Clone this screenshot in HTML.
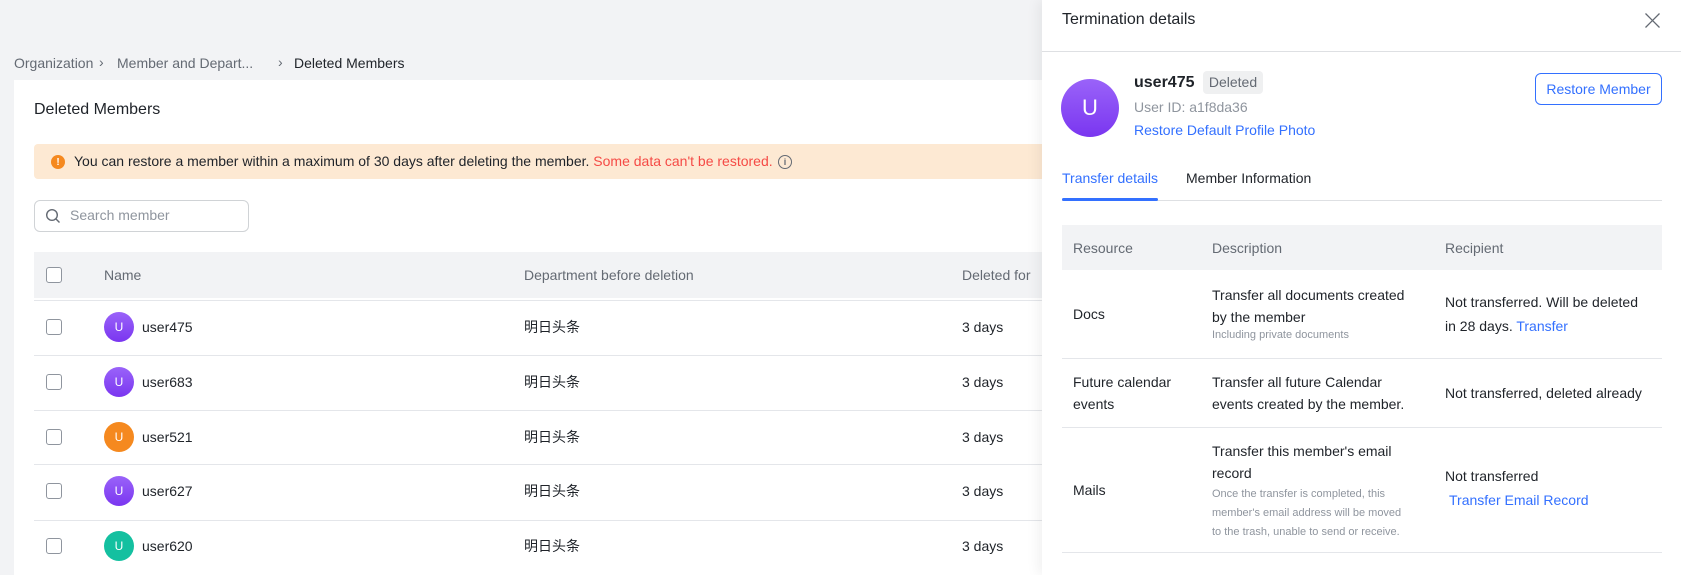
<!DOCTYPE html>
<html><head><meta charset="utf-8"><style>
*{box-sizing:border-box;margin:0;padding:0}
body{width:1681px;height:575px;overflow:hidden;background:#f2f3f5;font-family:"Liberation Sans","Noto Sans CJK SC",sans-serif;font-size:14px;color:#1f2329;position:relative}
.abs{position:absolute;white-space:nowrap}
.av{position:absolute;border-radius:50%;color:#fff;display:flex;align-items:center;justify-content:center;font-size:12px}
.pur{background:linear-gradient(180deg,#9a63f9,#7a36f0)}
.cb{position:absolute;width:16px;height:16px;border:1px solid #8f959e;border-radius:3px;background:#fff}
.sep{position:absolute;height:1px;background:#e4e6ea}
.blue{color:#3370ff}
.grey{color:#8f959e}
.cn{top:-2px}
</style></head><body>
<div class="abs" style="left:14px;top:55px;color:#646a73">Organization</div>
<div class="abs" style="left:99px;top:54px;color:#646a73">›</div>
<div class="abs" style="left:117px;top:55px;color:#646a73">Member and Depart...</div>
<div class="abs" style="left:278px;top:54px;color:#646a73">›</div>
<div class="abs" style="left:294px;top:55px;color:#1f2329">Deleted Members</div>

<div style="position:absolute;left:14px;top:80px;width:1100px;height:495px;background:#fff"></div>
<div class="abs" style="left:34px;top:101px;font-size:16px">Deleted Members</div>
<div style="position:absolute;left:34px;top:144px;width:1100px;height:35px;background:#fde9d3;border-radius:4px"></div>
<div class="av" style="left:51px;top:155px;width:14px;height:14px;background:#f5891f;font-size:10px;font-weight:bold">!</div>
<div class="abs" style="left:74px;top:153px">You can restore a member within a maximum of 30 days after deleting the member. <span style="color:#f54a45">Some data can't be restored.</span></div>
<div class="av" style="left:778px;top:155px;width:14px;height:14px;border:1.3px solid #646a73;color:#646a73;font-size:9px;font-weight:bold">i</div>

<div style="position:absolute;left:34px;top:200px;width:215px;height:32px;border:1px solid #d0d3d6;border-radius:6px"></div>
<svg class="abs" style="left:45px;top:208px" width="16" height="16" viewBox="0 0 16 16"><circle cx="7" cy="7" r="5.3" fill="none" stroke="#646a73" stroke-width="1.4"/><path d="M11 11l3.5 3.5" stroke="#646a73" stroke-width="1.4"/></svg>
<div class="abs grey" style="left:70px;top:207px">Search member</div>

<div style="position:absolute;left:34px;top:252px;width:1100px;height:46px;background:#f2f3f5"></div>
<div class="cb" style="left:46px;top:267px"></div>
<div class="abs" style="left:104px;top:267px;color:#646a73">Name</div>
<div class="abs" style="left:524px;top:267px;color:#646a73">Department before deletion</div>
<div class="abs" style="left:962px;top:267px;color:#646a73">Deleted for</div>

<div class="sep" style="left:34px;top:300px;width:1100px"></div>
<div class="cb" style="left:46px;top:319px"></div><div class="av pur" style="left:104px;top:312px;width:30px;height:30px">U</div><div class="abs" style="left:142px;top:319px">user475</div><div class="abs" style="left:524px;top:317px">明日头条</div><div class="abs" style="left:962px;top:319px">3 days</div>
<div class="sep" style="left:34px;top:355px;width:1100px"></div>
<div class="cb" style="left:46px;top:374px"></div><div class="av pur" style="left:104px;top:367px;width:30px;height:30px">U</div><div class="abs" style="left:142px;top:374px">user683</div><div class="abs" style="left:524px;top:372px">明日头条</div><div class="abs" style="left:962px;top:374px">3 days</div>
<div class="sep" style="left:34px;top:410px;width:1100px"></div>
<div class="cb" style="left:46px;top:429px"></div><div class="av" style="left:104px;top:422px;width:30px;height:30px;background:#f5891f">U</div><div class="abs" style="left:142px;top:429px">user521</div><div class="abs" style="left:524px;top:427px">明日头条</div><div class="abs" style="left:962px;top:429px">3 days</div>
<div class="sep" style="left:34px;top:464px;width:1100px"></div>
<div class="cb" style="left:46px;top:483px"></div><div class="av pur" style="left:104px;top:476px;width:30px;height:30px">U</div><div class="abs" style="left:142px;top:483px">user627</div><div class="abs" style="left:524px;top:481px">明日头条</div><div class="abs" style="left:962px;top:483px">3 days</div>
<div class="sep" style="left:34px;top:520px;width:1100px"></div>
<div class="cb" style="left:46px;top:538px"></div><div class="av" style="left:104px;top:531px;width:30px;height:30px;background:#14c0a0">U</div><div class="abs" style="left:142px;top:538px">user620</div><div class="abs" style="left:524px;top:536px">明日头条</div><div class="abs" style="left:962px;top:538px">3 days</div>

<!-- drawer -->
<div style="position:absolute;left:1042px;top:0;width:639px;height:575px;background:#fff;box-shadow:-4px 0 12px rgba(0,0,0,.06)"></div>
<div class="abs" style="left:1062px;top:11px;font-size:16px">Termination details</div>
<svg class="abs" style="left:1644px;top:12px" width="17" height="17" viewBox="0 0 17 17"><path d="M1.5 1.5L15.5 15.5M15.5 1.5L1.5 15.5" stroke="#646a73" stroke-width="1.3"/></svg>
<div class="sep" style="left:1042px;top:51px;width:639px;background:#dee0e3"></div>

<div class="av pur" style="left:1061px;top:79px;width:58px;height:58px;font-size:22px">U</div>
<div class="abs" style="left:1134px;top:74px;font-size:16px;font-weight:bold">user475</div>
<div class="abs" style="left:1203px;top:71px;width:60px;height:23px;background:#eff0f1;border-radius:4px;color:#646a73;text-align:center;line-height:23px">Deleted</div>
<div class="abs grey" style="left:1134px;top:99px">User ID: a1f8da36</div>
<div class="abs blue" style="left:1134px;top:122px">Restore Default Profile Photo</div>
<div class="abs blue" style="left:1535px;top:73px;width:127px;height:32px;border:1px solid #3370ff;border-radius:6px;text-align:center;line-height:30px">Restore Member</div>

<div class="abs blue" style="left:1062px;top:170px">Transfer details</div>
<div class="abs" style="left:1186px;top:170px">Member Information</div>
<div class="sep" style="left:1062px;top:200px;width:600px;background:#dee0e3"></div>
<div style="position:absolute;left:1062px;top:198px;width:96px;height:3px;background:#3370ff;border-radius:2px"></div>

<div style="position:absolute;left:1062px;top:225px;width:600px;height:45px;background:#f2f3f5"></div>
<div class="abs" style="left:1073px;top:240px;color:#646a73">Resource</div>
<div class="abs" style="left:1212px;top:240px;color:#646a73">Description</div>
<div class="abs" style="left:1445px;top:240px;color:#646a73">Recipient</div>

<div class="abs" style="left:1073px;top:306px">Docs</div>
<div class="abs" style="left:1212px;top:284px;line-height:22px">Transfer all documents created<br>by the member</div>
<div class="abs grey" style="left:1212px;top:329px;font-size:11px">Including private documents</div>
<div class="abs" style="left:1445px;top:290px;line-height:24px">Not transferred. Will be deleted<br>in 28 days. <span class="blue">Transfer</span></div>
<div class="sep" style="left:1062px;top:358px;width:600px"></div>

<div class="abs" style="left:1073px;top:371px;line-height:22px">Future calendar<br>events</div>
<div class="abs" style="left:1212px;top:371px;line-height:22px">Transfer all future Calendar<br>events created by the member.</div>
<div class="abs" style="left:1445px;top:385px">Not transferred, deleted already</div>
<div class="sep" style="left:1062px;top:427px;width:600px"></div>

<div class="abs" style="left:1073px;top:482px">Mails</div>
<div class="abs" style="left:1212px;top:440px;line-height:22px">Transfer this member's email<br>record</div>
<div class="abs grey" style="left:1212px;top:485px;font-size:11px;line-height:19px">Once the transfer is completed, this<br>member's email address will be moved<br>to the trash, unable to send or receive.</div>
<div class="abs" style="left:1445px;top:468px">Not transferred</div>
<div class="abs blue" style="left:1449px;top:492px">Transfer Email Record</div>
<div class="sep" style="left:1062px;top:552px;width:600px"></div>
</body></html>
